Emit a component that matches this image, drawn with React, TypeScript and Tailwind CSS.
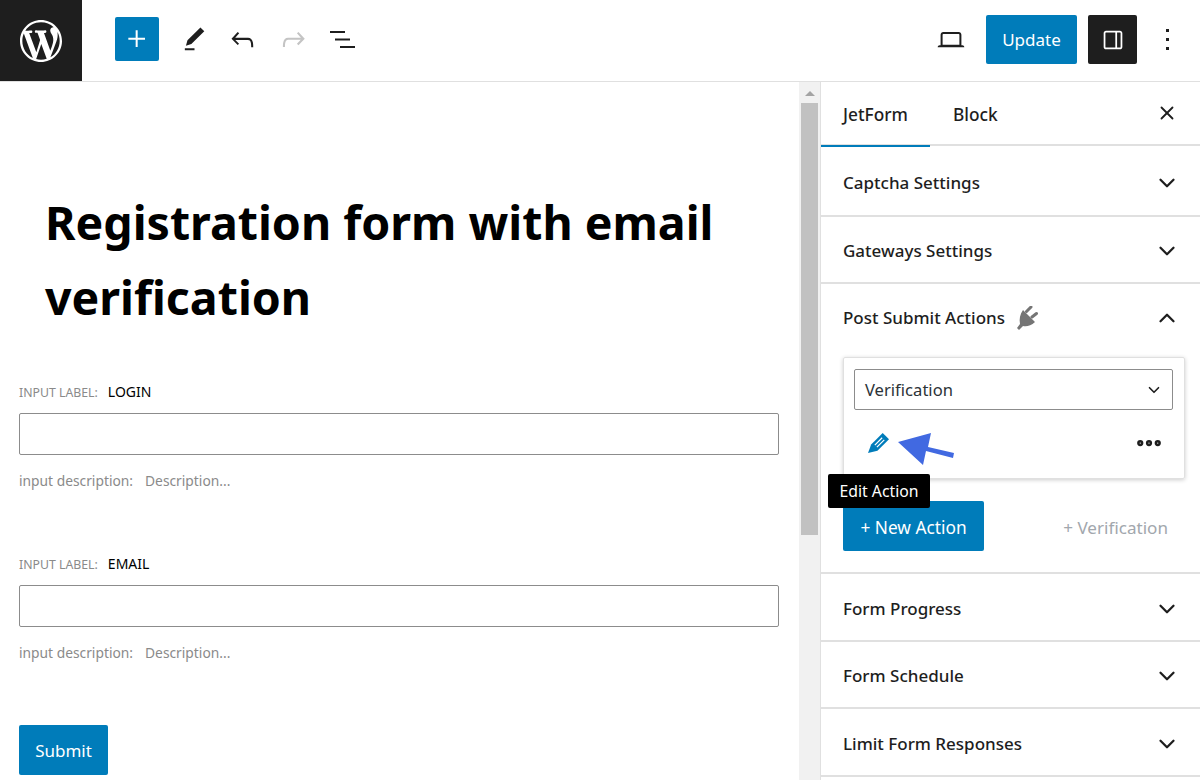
import { ChevronDown, ChevronUp, MoreHorizontal, X } from 'lucide-react'

const font = 'font-["Noto_Sans","Open_Sans",sans-serif]'

function Panel({ title, className = 'h-[68px] pt-[2px]' }: { title: string; className?: string }) {
  return (
    <div className={`flex items-center justify-between pl-[22px] pr-[20px] border-b-2 border-[#e0e0e0] ${className}`}>
      <span className="text-[17px] font-medium text-[#1e1e1e]">{title}</span>
      <ChevronDown size={26} strokeWidth={2.1} className="text-[#1e1e1e]" />
    </div>
  )
}

function Field({ label, className = '' }: { label: string; className?: string }) {
  return (
    <div className={className}>
      <div className="flex items-baseline h-[29px] pt-[3px]">
        <span className="text-[12.3px] text-[#8a8a8a] mr-[10px]">INPUT LABEL:</span>
        <span className="text-[14px] text-black">{label}</span>
      </div>
      <div className="h-[42px] mt-[6px] border border-[#8c8c8c] rounded-[2px] bg-white" />
      <div className="flex items-center mt-[16px] text-[13.8px] text-[#8a8a8a]">
        <span className="mr-[12px]">input description:</span>
        <span>Description...</span>
      </div>
    </div>
  )
}

export default function App() {
  return (
    <div className={`relative w-[1200px] h-[780px] overflow-hidden bg-white ${font}`}>
      {/* Top bar */}
      <div className="flex h-[82px] border-b border-[#e0e0e0]">
        <div className="flex items-center justify-center w-[82px] h-[81px] bg-[#1e1e1e]">
          <svg width="42" height="42" viewBox="0 0 20 20" fill="#fff">
            <path d="M20 10c0-5.51-4.49-10-10-10C4.48 0 0 4.49 0 10c0 5.52 4.48 10 10 10 5.51 0 10-4.48 10-10zM7.78 15.37L4.37 6.22c.55-.02 1.17-.08 1.17-.08.5-.06.44-1.13-.06-1.11 0 0-1.45.11-2.37.11-.18 0-.37 0-.58-.01C4.12 2.69 6.87 1.11 10 1.11c2.33 0 4.45.87 6.05 2.34-.68-.11-1.65.39-1.65 1.58 0 .74.45 1.36.9 2.1.35.61.55 1.36.55 2.46 0 1.49-1.4 5-1.4 5l-3.03-8.37c.54-.02.82-.17.82-.17.5-.05.44-1.25-.06-1.22 0 0-1.44.12-2.38.12-.87 0-2.33-.12-2.33-.12-.5-.03-.56 1.2-.06 1.22l.92.08 1.26 3.41zM17.41 10c.24-.64.74-1.87.43-4.25.7 1.29 1.05 2.71 1.05 4.25 0 3.29-1.73 6.24-4.4 7.78.97-2.59 1.94-5.2 2.92-7.78zM6.1 18.09C3.12 16.65 1.11 13.53 1.11 10c0-1.3.23-2.48.72-3.59C3.25 10.3 4.67 14.2 6.1 18.09zm4.03-6.63l2.58 6.98c-.86.29-1.76.45-2.71.45-.79 0-1.57-.11-2.29-.33.81-2.38 1.62-4.74 2.42-7.1z" />
          </svg>
        </div>
        <div className="flex flex-1 items-center h-[79px]">
          <div className="flex items-center justify-center w-[44px] h-[44px] ml-[33px] mb-[1px] rounded-[2px] bg-[#007cba]">
            <svg width="32" height="32" viewBox="0 0 24 24" fill="#fff">
              <path d="M11 12.5V18h1.5v-5.5H18V11h-5.5V5.5H11V11H5.5v1.5z" />
            </svg>
          </div>
          <svg className="ml-[21px]" width="29" height="29" viewBox="0 0 24 24" fill="#1e1e1e">
            <path d="M20.1 5.1 16.9 2 6.2 12.7l-1.3 4.4 4.5-1.3L20.1 5.1zM4 20.8h8v-1.5H4v1.5z" />
          </svg>
          <svg className="ml-[17px]" width="33" height="33" viewBox="0 0 24 24" fill="#1e1e1e">
            <path d="M18.3 11.7c-.6-.6-1.4-.9-2.3-.9H6.7l2.9-3.3-1.1-1-4.5 5L8.5 16l1-1-2.7-2.7H16c.5 0 .9.2 1.3.5 1 1 1 3.4 1 4.5v.3h1.5v-.2c0-1.5 0-4.3-1.5-5.7z" />
          </svg>
          <svg className="ml-[18px]" width="33" height="33" viewBox="0 0 24 24" fill="#c4c4c4">
            <path d="M15.6 6.5l-1.1 1 2.9 3.3H8c-.9 0-1.7.3-2.3.9-1.4 1.5-1.4 4.2-1.4 5.6v.2h1.5v-.3c0-1.1 0-3.5 1-4.5.3-.3.7-.5 1.3-.5h9.2L14.5 15l1.1 1.1 4.6-4.6-4.6-5z" />
          </svg>
          <svg className="ml-[20px]" width="25" height="18" viewBox="0 0 25 18" fill="#1e1e1e">
            <path d="M0 0h15v2H0zM5 7.5h15v2H5zM10 15h15v2H10z" />
          </svg>
          <div className="flex-1" />
          <svg width="32" height="32" viewBox="0 0 24 24" fill="#1e1e1e" className="mr-[19px]">
            <path d="M20.5 16h-.7V8c0-1.1-.9-2-2-2H6.2c-1.1 0-2 .9-2 2v8h-.7c-.8 0-1.5.7-1.5 1.5h20c0-.8-.7-1.5-1.5-1.5zM5.7 8c0-.3.2-.5.5-.5h11.6c.3 0 .5.2.5.5v7.6H5.7V8z" />
          </svg>
          <div className="flex items-center justify-center w-[91px] h-[49px] pt-[1px] rounded-[2px] bg-[#007cba] text-[17px] text-white">Update</div>
          <div className="flex items-center justify-center w-[49px] h-[49px] ml-[11px] rounded-[2px] bg-[#1e1e1e]">
            <svg width="28" height="28" viewBox="0 0 24 24" fill="#fff">
              <path d="M18 4H6c-1.1 0-2 .9-2 2v12c0 1.1.9 2 2 2h12c1.1 0 2-.9 2-2V6c0-1.1-.9-2-2-2zM5.5 18V6c0-.3.2-.5.5-.5h8v13H6c-.3 0-.5-.2-.5-.5zm13 0c0 .3-.2.5-.5.5h-2.5v-13H18c.3 0 .5.2.5.5v12z" />
            </svg>
          </div>
          <div className="flex flex-col items-center justify-center gap-[6px] w-[60px] mr-[3px]">
            <span className="w-[3px] h-[3px] bg-[#1e1e1e]" />
            <span className="w-[3px] h-[3px] bg-[#1e1e1e]" />
            <span className="w-[3px] h-[3px] bg-[#1e1e1e]" />
          </div>
        </div>
      </div>

      <div className="flex h-[698px]">
        {/* Editor canvas */}
        <div className="w-[799px] pl-[19px] pr-[20px]">
          <h1 className="ml-[26px] mt-[103px] text-[46.5px] leading-[75px] font-bold text-black">
            Registration form with email verification
          </h1>
          <Field label="LOGIN" className="mt-[43px]" />
          <Field label="EMAIL" className="mt-[58px]" />
          <div className="flex items-center justify-center w-[89px] h-[50px] mt-[62px] pt-[1px] rounded-[2px] bg-[#007cba] text-[17px] text-white">Submit</div>
        </div>

        {/* Scrollbar */}
        <div className="flex flex-col items-center w-[21px] bg-[#f1f1f1]">
          <div className="mt-[9px] w-0 h-0 border-l-[5px] border-r-[5px] border-b-[5px] border-l-transparent border-r-transparent border-b-[#a3a3a3]" />
          <div className="w-[17px] h-[432px] mt-[7px] bg-[#c1c1c1]" />
        </div>

        {/* Settings sidebar */}
        <div className="w-[380px] border-l border-[#e0e0e0]">
          <div className="flex items-center h-[64px] border-b-2 border-[#e0e0e0]">
            <div className="relative flex items-center justify-center w-[109px] h-[64px] pt-[4px] text-[17.3px] font-medium text-[#1e1e1e]">
              JetForm
              <div className="absolute left-0 right-0 bottom-[-2px] h-[2px] bg-[#007cba]" />
            </div>
            <span className="ml-[23px] pt-[4px] text-[17.3px] font-medium text-[#1e1e1e]">Block</span>
            <X size={22} strokeWidth={2} className="ml-auto mr-[22px] text-[#1e1e1e]" />
          </div>
          <div className="h-[3px]" />
          <Panel title="Captcha Settings" />
          <Panel title="Gateways Settings" className="h-[67px] pt-[2px]" />
          <div className="h-[290px] border-b-2 border-[#e0e0e0]">
            <div className="flex items-center justify-between h-[68px] pl-[22px] pr-[20px]">
              <div className="flex items-center">
                <span className="text-[17px] font-medium text-[#1e1e1e]">Post Submit Actions</span>
                <svg className="ml-[11px]" width="22" height="24" viewBox="0 0 22 24">
                  <path fill="#757575" d="M7 4 19 16C15 20 10 21 7 20L3 24 1 22 4 18C3 13 4 8 7 4z" />
                  <path stroke="#757575" strokeWidth="3" strokeLinecap="round" d="M10.5 5.5 15 1M16 11 20.5 7.5" />
                </svg>
              </div>
              <ChevronUp size={26} strokeWidth={2.1} className="text-[#1e1e1e]" />
            </div>
            <div className="ml-[22px] mr-[15px] h-[122px] mt-[5px] rounded-[2px] border border-[#e0e0e0] shadow-[0_1px_4px_rgba(0,0,0,0.2)] pl-[10px] pr-[11px] pt-[11px]">
              <div className="flex items-center justify-between h-[41px] pl-[10px] pr-[9px] pt-[1px] rounded-[2px] border border-[#8c8c8c] text-[16.6px] text-[#2c3338]">
                Verification
                <ChevronDown size={18} strokeWidth={2.2} className="text-[#1e1e1e]" />
              </div>
              <div className="flex items-center justify-between h-[50px] mt-[8px] pl-[14px] pr-[9px]">
                <svg width="21" height="21" viewBox="0 0 20 20">
                  <path fill="#007cba" d="M0 19 3 11 14 0 20 6 9 17z" />
                  <path stroke="#fff" strokeWidth="1.2" d="M6.5 11.5 13.5 4.5M8.5 13.5 15.5 6.5" />
                </svg>
                <MoreHorizontal size={30} strokeWidth={3} className="text-[#1e1e1e]" />
              </div>
            </div>
            <div className="flex items-center justify-between mt-[22px] ml-[22px] mr-[32px]">
              <div className="flex items-center justify-center w-[141px] h-[50px] pt-[3px] rounded-[2px] bg-[#007cba] text-[17.3px] text-white">+ New Action</div>
              <span className="pt-[3px] text-[17.1px] text-[#a2a7ad]">+ Verification</span>
            </div>
          </div>
          <Panel title="Form Progress" className="h-[68px] pt-[3px]" />
          <Panel title="Form Schedule" className="h-[67px] pt-[2px]" />
          <Panel title="Limit Form Responses" className="h-[68px] pt-[3px]" />
        </div>
      </div>

      {/* Annotation arrow */}
      <svg className="absolute left-[896px] top-[430px]" width="62" height="36" viewBox="0 0 62 36" fill="#4169e1">
        <path d="M2 12 35 3 32 17 58 23 57 28 30 21 27 35z" />
      </svg>

      {/* Tooltip */}
      <div className="absolute left-[828px] top-[474px] flex items-center justify-center w-[102px] h-[34px] pt-[2px] rounded-[2px] bg-black text-[15.8px] text-white">
        Edit Action
      </div>
    </div>
  )
}
